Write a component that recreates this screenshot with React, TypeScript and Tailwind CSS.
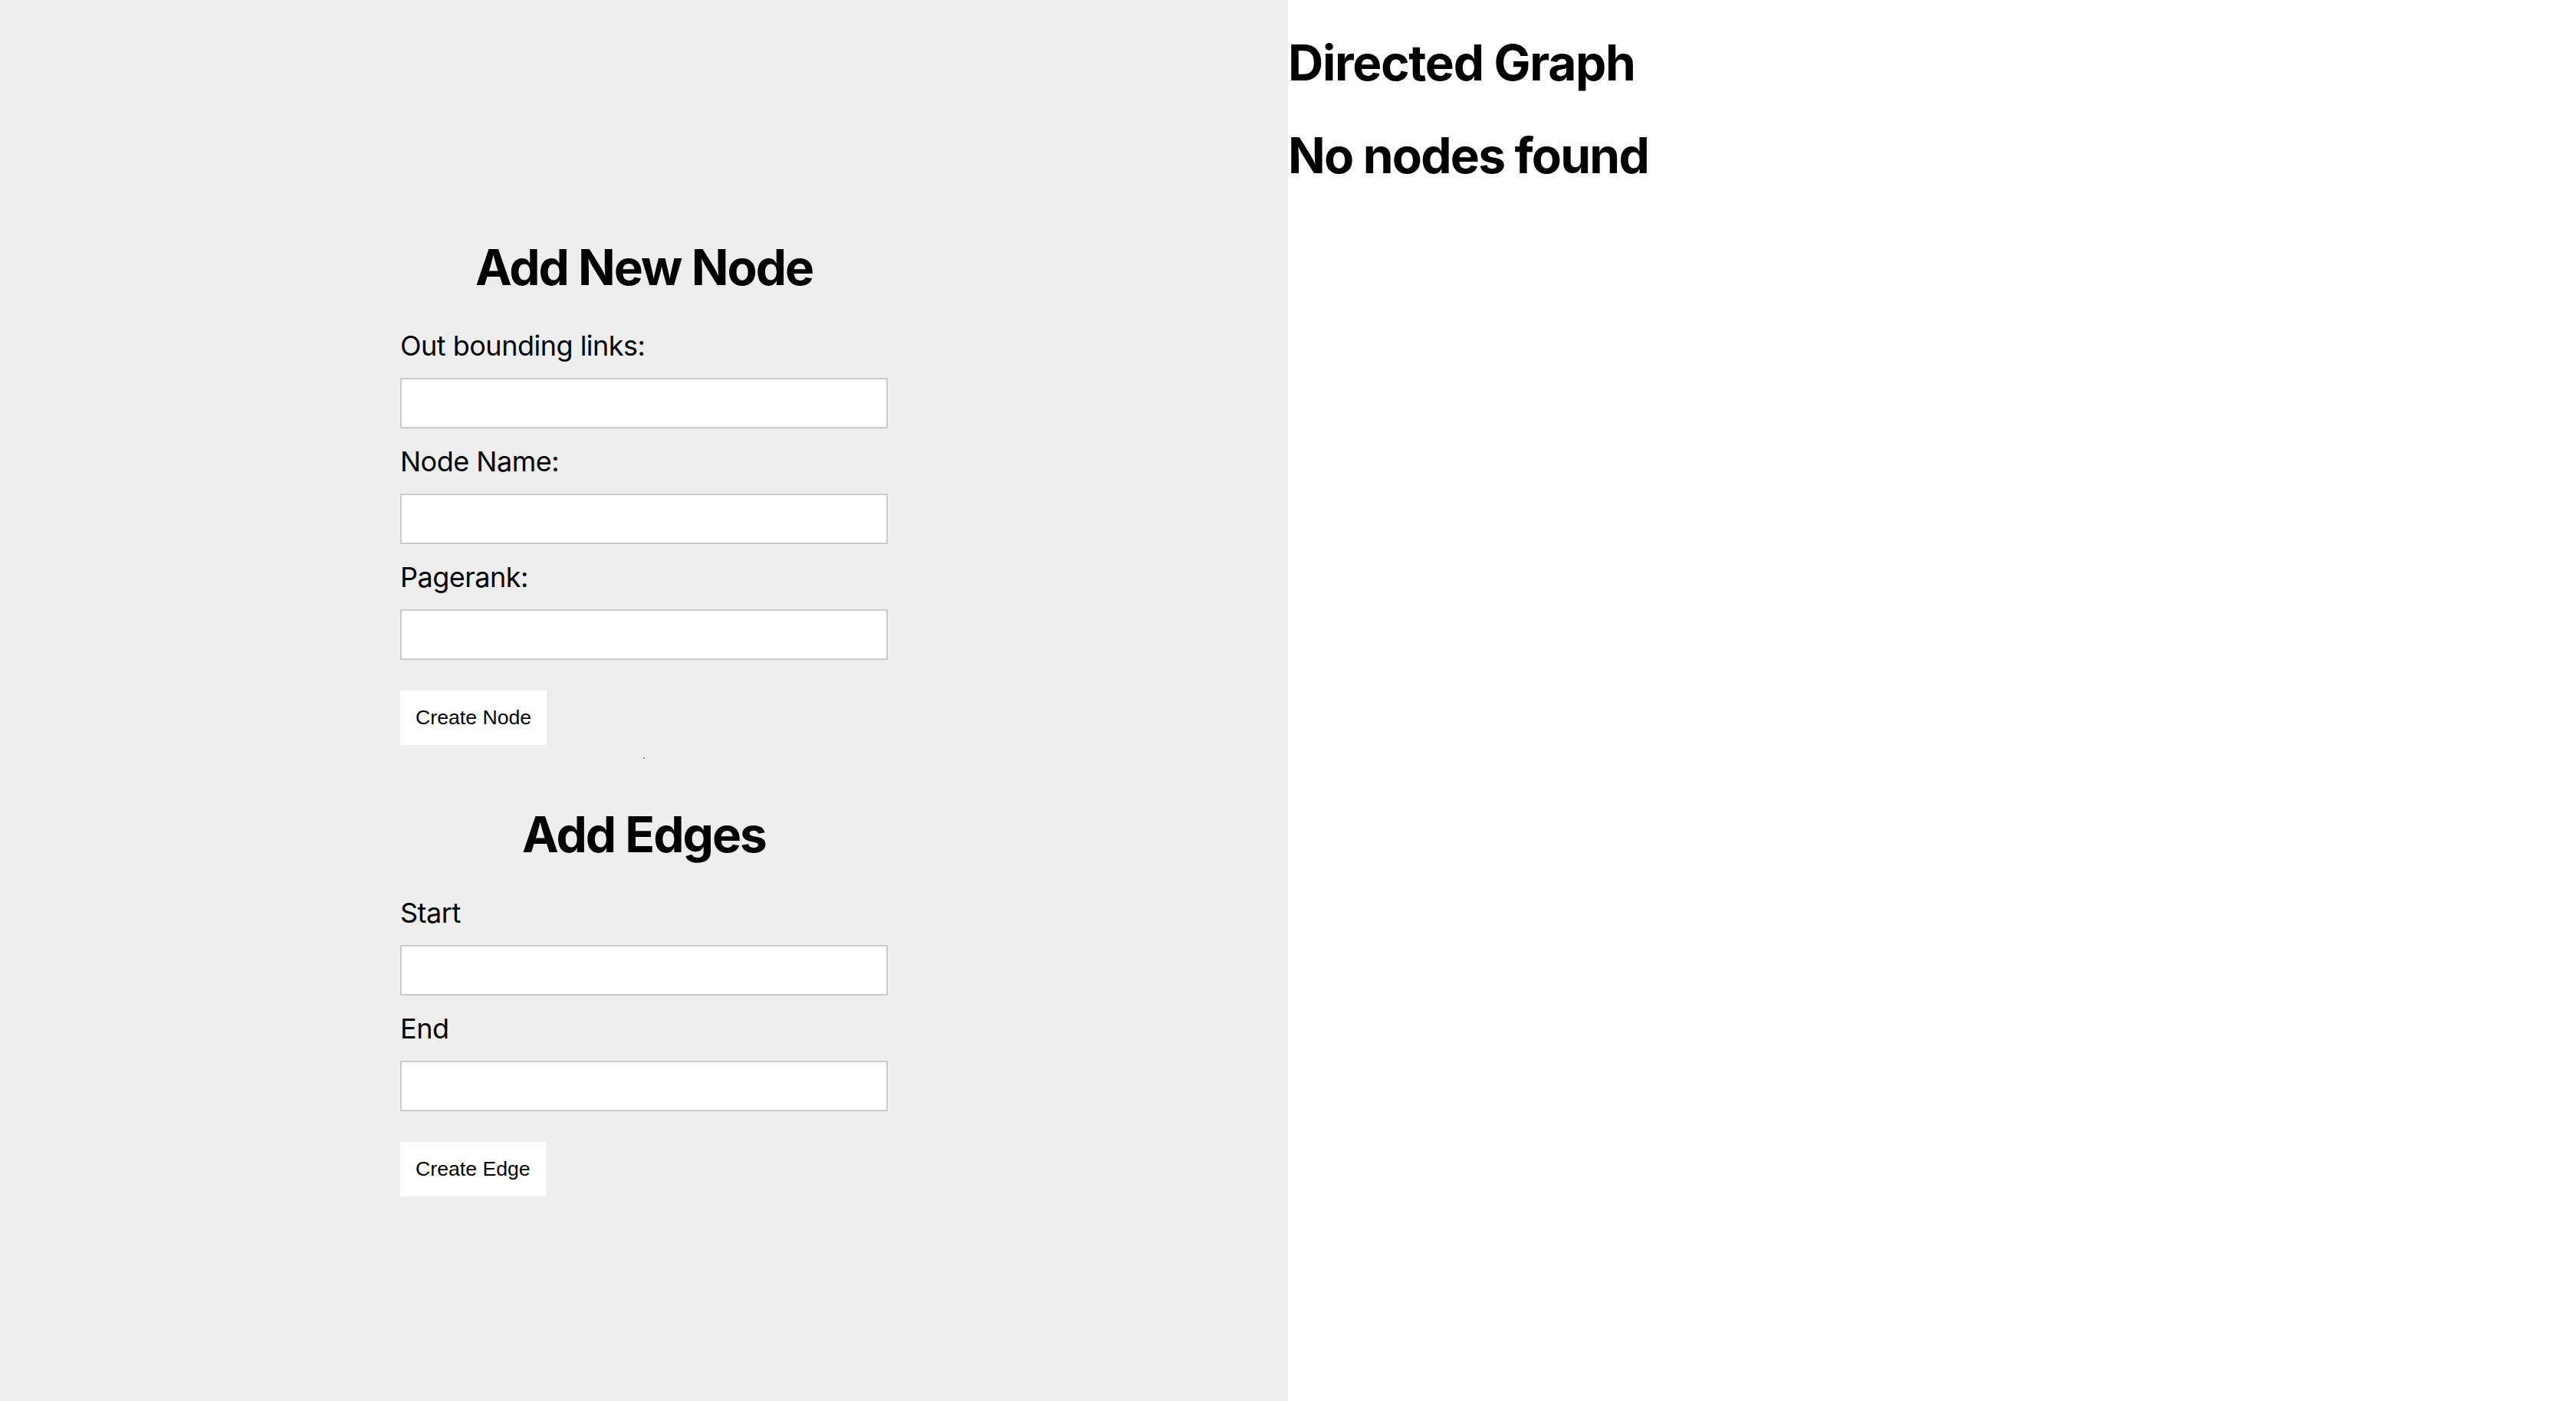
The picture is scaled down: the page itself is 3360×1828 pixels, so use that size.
import React from "react";

const inter = { fontFamily: "Inter, 'Noto Sans', sans-serif" };

function Field({ label }: { label: string }) {
  return (
    <>
      <label className="block text-[36px] leading-[46px] tracking-[-0.5px] text-black mb-[19px] font-['Inter',sans-serif]">
        {label}
      </label>
      <input
        type="text"
        className="block w-[636px] h-[66px] bg-white border-2 border-[#cccccc] outline-none"
      />
    </>
  );
}

function Btn({ text }: { text: string }) {
  return (
    <button
      type="button"
      className="mt-[40px] block h-[71px] bg-white px-[20px] text-[26.67px] leading-[31px] text-black font-['Liberation_Sans',Arial,sans-serif]"
    >
      {text}
    </button>
  );
}

export default function App() {
  return (
    <div className="flex h-screen w-full font-['Inter',sans-serif]">
      <div className="flex w-1/2 flex-col items-center justify-center bg-[#eeeeee]">
        <div className="mt-[42px] w-[636px]">
          <form onSubmit={(e) => e.preventDefault()}>
            <h2 className="mb-[40px] text-center text-[64px] font-bold leading-[78px] tracking-[-2px] text-black">
              Add New Node
            </h2>
            <Field label="Out bounding links:" />
            <div className="h-[20px]" />
            <Field label="Node Name:" />
            <div className="h-[20px]" />
            <Field label="Pagerank:" />
            <Btn text="Create Node" />
          </form>
          <div className="mx-auto mt-[16px] mb-[60px] h-[2px] w-[2px] bg-[#9a9a9a]" />
          <form onSubmit={(e) => e.preventDefault()}>
            <h2 className="mb-[40px] text-center text-[64px] font-bold leading-[78px] tracking-[-2px] text-black">
              Add Edges
            </h2>
            <Field label="Start" />
            <div className="h-[20px]" />
            <Field label="End" />
            <Btn text="Create Edge" />
          </form>
        </div>
      </div>
      <div className="w-1/2 bg-white" style={inter}>
        <h1 className="my-[43px] text-[64px] font-bold leading-[78px] tracking-[-1.3px] text-black">
          Directed Graph
        </h1>
        <h1 className="my-[43px] text-[64px] font-bold leading-[78px] tracking-[-1.8px] text-black">
          No nodes found
        </h1>
      </div>
    </div>
  );
}
